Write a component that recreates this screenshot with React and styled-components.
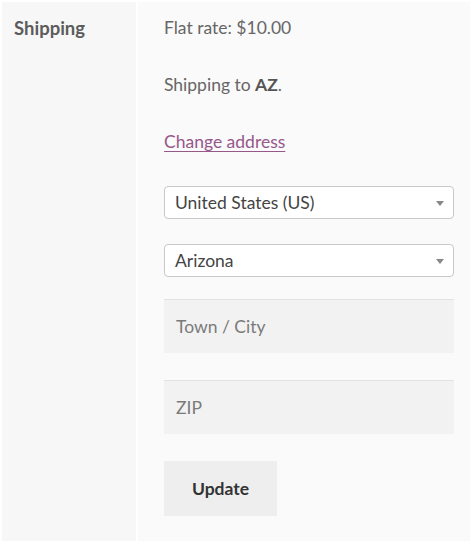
import React from 'react';
import styled, { createGlobalStyle } from 'styled-components';

const GlobalStyle = createGlobalStyle`
  html, body {
    margin: 0;
    padding: 0;
    background: #fff;
  }
  body {
    font-family: Lato, "Open Sans", sans-serif;
    color: #666;
  }
`;

const Table = styled.div`
  display: grid;
  grid-template-columns: 134px 1fr;
  gap: 2px;
  margin: 2px 4px 4px 2px;
  height: 539px;
`;

const Label = styled.div`
  background: #f7f7f7;
  padding: 15px 12px;
  font-size: 18.5px;
  font-weight: 700;
  color: #5c5c5c;
`;

const Cell = styled.div`
  background: #fafafa;
  padding: 12px 16px 0 26px;
  display: flex;
  flex-direction: column;
`;

const Para = styled.p`
  margin: 0 0 30px;
  font-size: 17.5px;
  line-height: 27px;
  color: #666;

  strong {
    color: #555;
    font-weight: 700;
  }
`;

const ChangeLink = styled.a`
  color: #96588a;
  text-decoration: underline;
  text-underline-offset: 3px;
  cursor: pointer;
`;

const Form = styled.div`
  display: flex;
  flex-direction: column;
  gap: 25px;
  margin-top: 1px;
  width: 290px;
`;

const SelectBox = styled.div`
  position: relative;
  height: 33px;
  box-sizing: border-box;
  border: 1px solid #c8c8c8;
  border-radius: 4px;
  background: #fff;
  display: flex;
  align-items: center;
  padding: 0 10px;
  font-size: 17.5px;
  color: #444;
`;

const Arrow = styled.span`
  position: absolute;
  right: 9px;
  top: 50%;
  margin-top: -2px;
  width: 0;
  height: 0;
  border-left: 4px solid transparent;
  border-right: 4px solid transparent;
  border-top: 5px solid #888;
`;

const Fields = styled.div`
  display: flex;
  flex-direction: column;
  gap: 27px;
  margin-top: -3px;
`;

const Input = styled.input`
  height: 54px;
  box-sizing: border-box;
  border: 0;
  background: #f2f2f2;
  box-shadow: inset 0 1px 0 #e2e2e2;
  padding: 0 12px;
  font-family: inherit;
  font-size: 17.5px;
  color: #444;
  outline: none;

  &::placeholder {
    color: #7a7a7a;
  }
`;

const Button = styled.button`
  align-self: flex-start;
  width: 113px;
  height: 55px;
  border: 0;
  background: #eeeeee;
  font-family: inherit;
  font-size: 17.5px;
  font-weight: 700;
  color: #333;
  cursor: pointer;
`;

const Select = ({ value }) => (
  <SelectBox>
    {value}
    <Arrow />
  </SelectBox>
);

export default function App() {
  return (
    <>
      <GlobalStyle />
      <Table>
        <Label>Shipping</Label>
        <Cell>
          <Para>Flat rate: $10.00</Para>
          <Para>
            Shipping to <strong>AZ</strong>.
          </Para>
          <Para>
            <ChangeLink>Change address</ChangeLink>
          </Para>
          <Form>
            <Select value="United States (US)" />
            <Select value="Arizona" />
            <Fields>
              <Input placeholder="Town / City" />
              <Input placeholder="ZIP" />
              <Button>Update</Button>
            </Fields>
          </Form>
        </Cell>
      </Table>
    </>
  );
}
